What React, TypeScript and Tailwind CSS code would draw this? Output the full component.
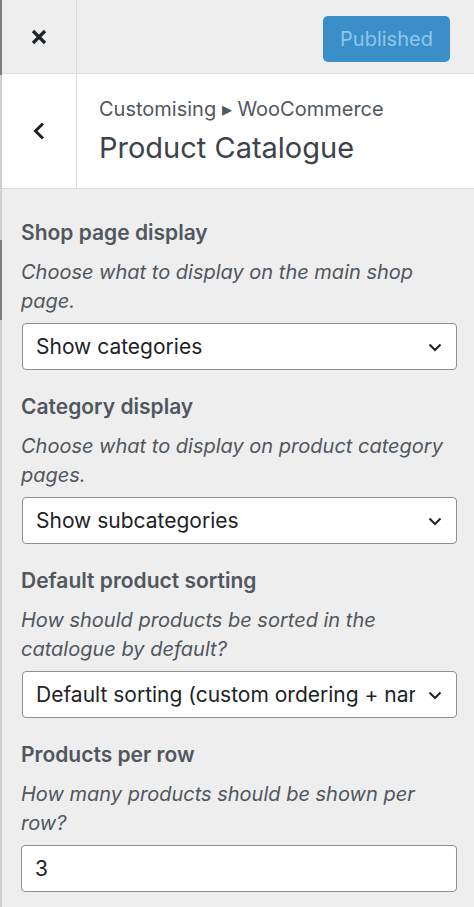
import React from 'react';

const sections = [
    {
        title: 'Shop page display',
        desc: 'Choose what to display on the main shop page.',
        value: 'Show categories',
        type: 'select',
    },
    {
        title: 'Category display',
        desc: 'Choose what to display on product category pages.',
        value: 'Show subcategories',
        type: 'select',
    },
    {
        title: 'Default product sorting',
        desc: 'How should products be sorted in the catalogue by default?',
        value: 'Default sorting (custom ordering + name)',
        type: 'select',
    },
    {
        title: 'Products per row',
        desc: 'How many products should be shown per row?',
        value: '3',
        type: 'input',
    },
];

const Chevron = () => (
    <svg width="16" height="16" viewBox="0 0 16 16" fill="none">
        <path d="M2.5 5.5 8 11l5.5-5.5" stroke="#1d2327" strokeWidth="2" />
    </svg>
);

const App = () => {
    return (
        <div
            className="flex min-h-[907px] w-[474px] overflow-hidden bg-[#eeeeee]"
            style={{ fontFamily: 'Inter, "Noto Sans", sans-serif' }}
        >
            {/* left edge strip */}
            <div className="flex w-[2px] shrink-0 flex-col">
                <div className="h-[75px] bg-[#7d7d7d]" />
                <div className="h-[165px] bg-[#cfcfcf]" />
                <div className="h-[80px] bg-[#7d7d7d]" />
                <div className="flex-1 bg-[#cfcfcf]" />
            </div>

            <div className="flex min-w-0 flex-1 flex-col">
                {/* top bar */}
                <div className="flex h-[74px] border-b border-[#dcdcde] bg-[#eeeeee]">
                    <div className="flex w-[75px] items-center justify-center border-r border-[#dcdcde]">
                        <svg width="18" height="18" viewBox="0 0 18 18" fill="none">
                            <path d="M3 3l12 12M15 3L3 15" stroke="#1d2327" strokeWidth="3.2" />
                        </svg>
                    </div>
                    <div className="flex flex-1 items-center justify-end pt-[4px] pr-[24px]">
                        <button className="h-[46px] w-[127px] rounded-[5px] bg-[#3a8fc8] text-[20px] text-[#8fc6ec]">
                            Published
                        </button>
                    </div>
                </div>

                {/* header */}
                <div className="flex h-[115px] border-b border-[#dcdcde] bg-white">
                    <div className="flex w-[75px] items-center justify-center border-r border-[#dcdcde]">
                        <svg width="14" height="20" viewBox="0 0 14 20" fill="none">
                            <path d="M11 2.5 3.5 10l7.5 7.5" stroke="#1d2327" strokeWidth="3" />
                        </svg>
                    </div>
                    <div className="flex flex-col justify-center pl-[22px] text-[#50575e]">
                        <div className="text-[20px] leading-[26px]">Customising ▸ WooCommerce</div>
                        <div className="mt-[8px] text-[29px] leading-[36px] text-[#3c434a]">Product Catalogue</div>
                    </div>
                </div>

                {/* controls */}
                <div className="flex flex-col gap-[24px] pt-[31px] pl-[19px] pr-[17px]">
                    {sections.map((s) => (
                        <div key={s.title} className="flex min-w-0 flex-col">
                            <div className="text-[21px] font-semibold leading-[26px] text-[#50575e]">{s.title}</div>
                            <div className="mt-[12px] text-[20px] italic leading-[29px] text-[#50575e]">{s.desc}</div>
                            {s.type === 'select' ? (
                                <div className="mt-[7px] ml-[1px] flex h-[47px] items-center justify-between rounded-[4px] border border-[#8c8f94] bg-white pl-[13px] pr-[13px]">
                                    <span className="min-w-0 overflow-hidden whitespace-nowrap text-[21px] text-[#1d2327]">
                                        {s.value}
                                    </span>
                                    <span className="ml-[12px] shrink-0">
                                        <Chevron />
                                    </span>
                                </div>
                            ) : (
                                <div className="mt-[7px] flex h-[47px] items-center rounded-[4px] border border-[#8c8f94] bg-white pl-[13px] pr-[12px]">
                                    <span className="text-[21px] text-[#1d2327]">{s.value}</span>
                                </div>
                            )}
                        </div>
                    ))}
                </div>
            </div>
        </div>
    );
};

export default App;
